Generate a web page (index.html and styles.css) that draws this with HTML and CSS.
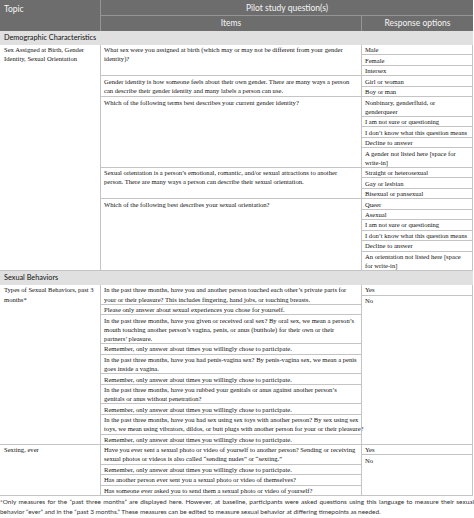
FILE: index.html
```html
<!DOCTYPE html>
<html lang="en">
<head>
<meta charset="utf-8">
<title>Pilot study questions</title>
<link rel="stylesheet" href="styles.css">
</head>
<body>
<div class="table">
  <div class="thead">
    <div class="th th-topic">Topic</div>
    <div class="th th-pilot">Pilot study question(s)</div>
    <div class="th th-items">Items</div>
    <div class="th th-resp">Response options</div>
  </div>

  <div class="band">Demographic Characteristics</div>
  <div class="section">
    <div class="topic">Sex Assigned at Birth, Gender<br>Identity, Sexual Orientation</div>
    <div class="body">
      <div class="group">
        <div class="item">What sex were you assigned at birth (which may or may not be different from your gender<br>identity)?</div>
        <div class="opts">
          <div class="opt">Male</div>
          <div class="opt">Female</div>
          <div class="opt">Intersex</div>
        </div>
      </div>
      <div class="group">
        <div class="item">Gender identity is how someone feels about their own gender. There are many ways a person<br>can describe their gender identity and many labels a person can use.</div>
        <div class="opts">
          <div class="opt">Girl or woman</div>
          <div class="opt">Boy or man</div>
        </div>
      </div>
      <div class="group">
        <div class="item">Which of the following terms best describes your current gender identity?</div>
        <div class="opts">
          <div class="opt">Nonbinary, genderfluid, or<br>genderqueer</div>
          <div class="opt">I am not sure or questioning</div>
          <div class="opt">I don’t know what this question means</div>
          <div class="opt">Decline to answer</div>
          <div class="opt">A gender not listed here [space for<br>write-in]</div>
        </div>
      </div>
      <div class="group">
        <div class="item">Sexual orientation is a person’s emotional, romantic, and/or sexual attractions to another<br>person. There are many ways a person can describe their sexual orientation.</div>
        <div class="opts">
          <div class="opt">Straight or heterosexual</div>
          <div class="opt">Gay or lesbian</div>
          <div class="opt">Bisexual or pansexual</div>
        </div>
      </div>
      <div class="group">
        <div class="item">Which of the following best describes your sexual orientation?</div>
        <div class="opts">
          <div class="opt">Queer</div>
          <div class="opt">Asexual</div>
          <div class="opt">I am not sure or questioning</div>
          <div class="opt">I don’t know what this question means</div>
          <div class="opt">Decline to answer</div>
          <div class="opt">An orientation not listed here [space<br>for write-in]</div>
        </div>
      </div>
    </div>
  </div>

  <div class="band">Sexual Behaviors</div>
  <div class="section">
    <div class="topic">Types of Sexual Behaviors, past 3<br>months*</div>
    <div class="body split">
      <div class="items">
        <div class="item">In the past three months, have you and another person touched each other’s private parts for<br>your or their pleasure? This includes fingering, hand jobs, or touching breasts.</div>
        <div class="item">Please only answer about sexual experiences you chose for yourself.</div>
        <div class="item">In the past three months, have you given or received oral sex? By oral sex, we mean a person’s<br>mouth touching another person’s vagina, penis, or anus (butthole) for their own or their<br>partners’ pleasure.</div>
        <div class="item">Remember, only answer about times you willingly chose to participate.</div>
        <div class="item">In the past three months, have you had penis-vagina sex? By penis-vagina sex, we mean a penis<br>goes inside a vagina.</div>
        <div class="item">Remember, only answer about times you willingly chose to participate.</div>
        <div class="item">In the past three months, have you rubbed your genitals or anus against another person’s<br>genitals or anus without penetration?</div>
        <div class="item">Remember, only answer about times you willingly chose to participate.</div>
        <div class="item">In the past three months, have you had sex using sex toys with another person? By sex using sex<br>toys, we mean using vibrators, dildos, or butt plugs with another person for your or their pleasure?</div>
        <div class="item">Remember, only answer about times you willingly chose to participate.</div>
      </div>
      <div class="opts">
        <div class="opt">Yes</div>
        <div class="opt">No</div>
      </div>
    </div>
  </div>

  <div class="section">
    <div class="topic">Sexting, ever</div>
    <div class="body split">
      <div class="items">
        <div class="item">Have you ever sent a sexual photo or video of yourself to another person? Sending or receiving<br>sexual photos or videos is also called “sending nudes” or “sexting.”</div>
        <div class="item">Remember, only answer about times you willingly chose to participate.</div>
        <div class="item">Has another person ever sent you a sexual photo or video of themselves?</div>
        <div class="item">Has someone ever asked you to send them a sexual photo or video of yourself?</div>
      </div>
      <div class="opts">
        <div class="opt">Yes</div>
        <div class="opt">No</div>
      </div>
    </div>
  </div>
</div>
<p class="note">*Only measures for the “past three months” are displayed here. However, at baseline, participants were asked questions using this language to measure their sexual behavior “ever” and in the “past 3 months.” These measures can be edited to measure sexual behavior at differing timepoints as needed.</p>
</body>
</html>
```

FILE: styles.css
```css
* { box-sizing: border-box; }

body {
  margin: 0;
  background: #ffffff;
  width: 474px;
}

.table {
  width: 473px;
  font-family: "Liberation Serif", "Times New Roman", serif;
  font-size: 6.6px;
  line-height: 9.2px;
  color: #121212;
}

.thead {
  display: grid;
  grid-template-columns: 101px 261px 111px;
  grid-template-rows: 16px 15px;
  background: #6d6d6d;
  color: #f5f5f5;
  font-family: Lato, "Liberation Sans", sans-serif;
  font-size: 8.5px;
  line-height: 15px;
}

.th-topic {
  grid-row: 1 / 3;
  padding: 2px 4px 0;
  border-right: 1px solid #959595;
}

.th-pilot {
  grid-column: 2 / 4;
  text-align: center;
  padding-top: 1px;
  border-bottom: 1px solid #959595;
}

.th-items {
  text-align: center;
  border-right: 1px solid #959595;
}

.th-resp {
  text-align: center;
}

.band {
  height: 14px;
  background: #e0e0e0;
  padding-left: 4px;
  font-family: Lato, "Liberation Sans", sans-serif;
  font-size: 7.3px;
  line-height: 14px;
  color: #111111;
}

.section {
  display: flex;
  border-bottom: 1px solid #c4c4c4;
  border-right: 1px solid #c4c4c4;
}

.topic {
  width: 101px;
  flex: none;
  padding: 0.25px 2px 0 4px;
  white-space: nowrap;
  border-right: 1px solid #c4c4c4;
}

.body {
  flex: 1;
  min-width: 0;
}

.split {
  display: flex;
}

.group {
  display: flex;
  border-bottom: 1px solid #c4c4c4;
}

.group:last-child {
  border-bottom: none;
}

.item {
  padding: 0.25px 3px 0;
  white-space: nowrap;
}

.group > .item,
.items {
  width: 260px;
  flex: none;
}

.items > .item {
  border-bottom: 1px solid #c4c4c4;
}

.items > .item:last-child {
  border-bottom: none;
}

.opts {
  flex: 1;
  display: flex;
  flex-direction: column;
  border-left: 1px solid #c4c4c4;
}

.opt {
  padding: 0.25px 3px 0;
  white-space: nowrap;
  border-bottom: 1px solid #c4c4c4;
}

.opt:last-child {
  border-bottom: none;
  flex: 1;
}

.note {
  margin: 0;
  padding-top: 1px;
  width: 474px;
  font-family: Lato, "Liberation Sans", sans-serif;
  font-size: 6.45px;
  line-height: 10.3px;
  color: #333333;
  text-align: justify;
}
```
